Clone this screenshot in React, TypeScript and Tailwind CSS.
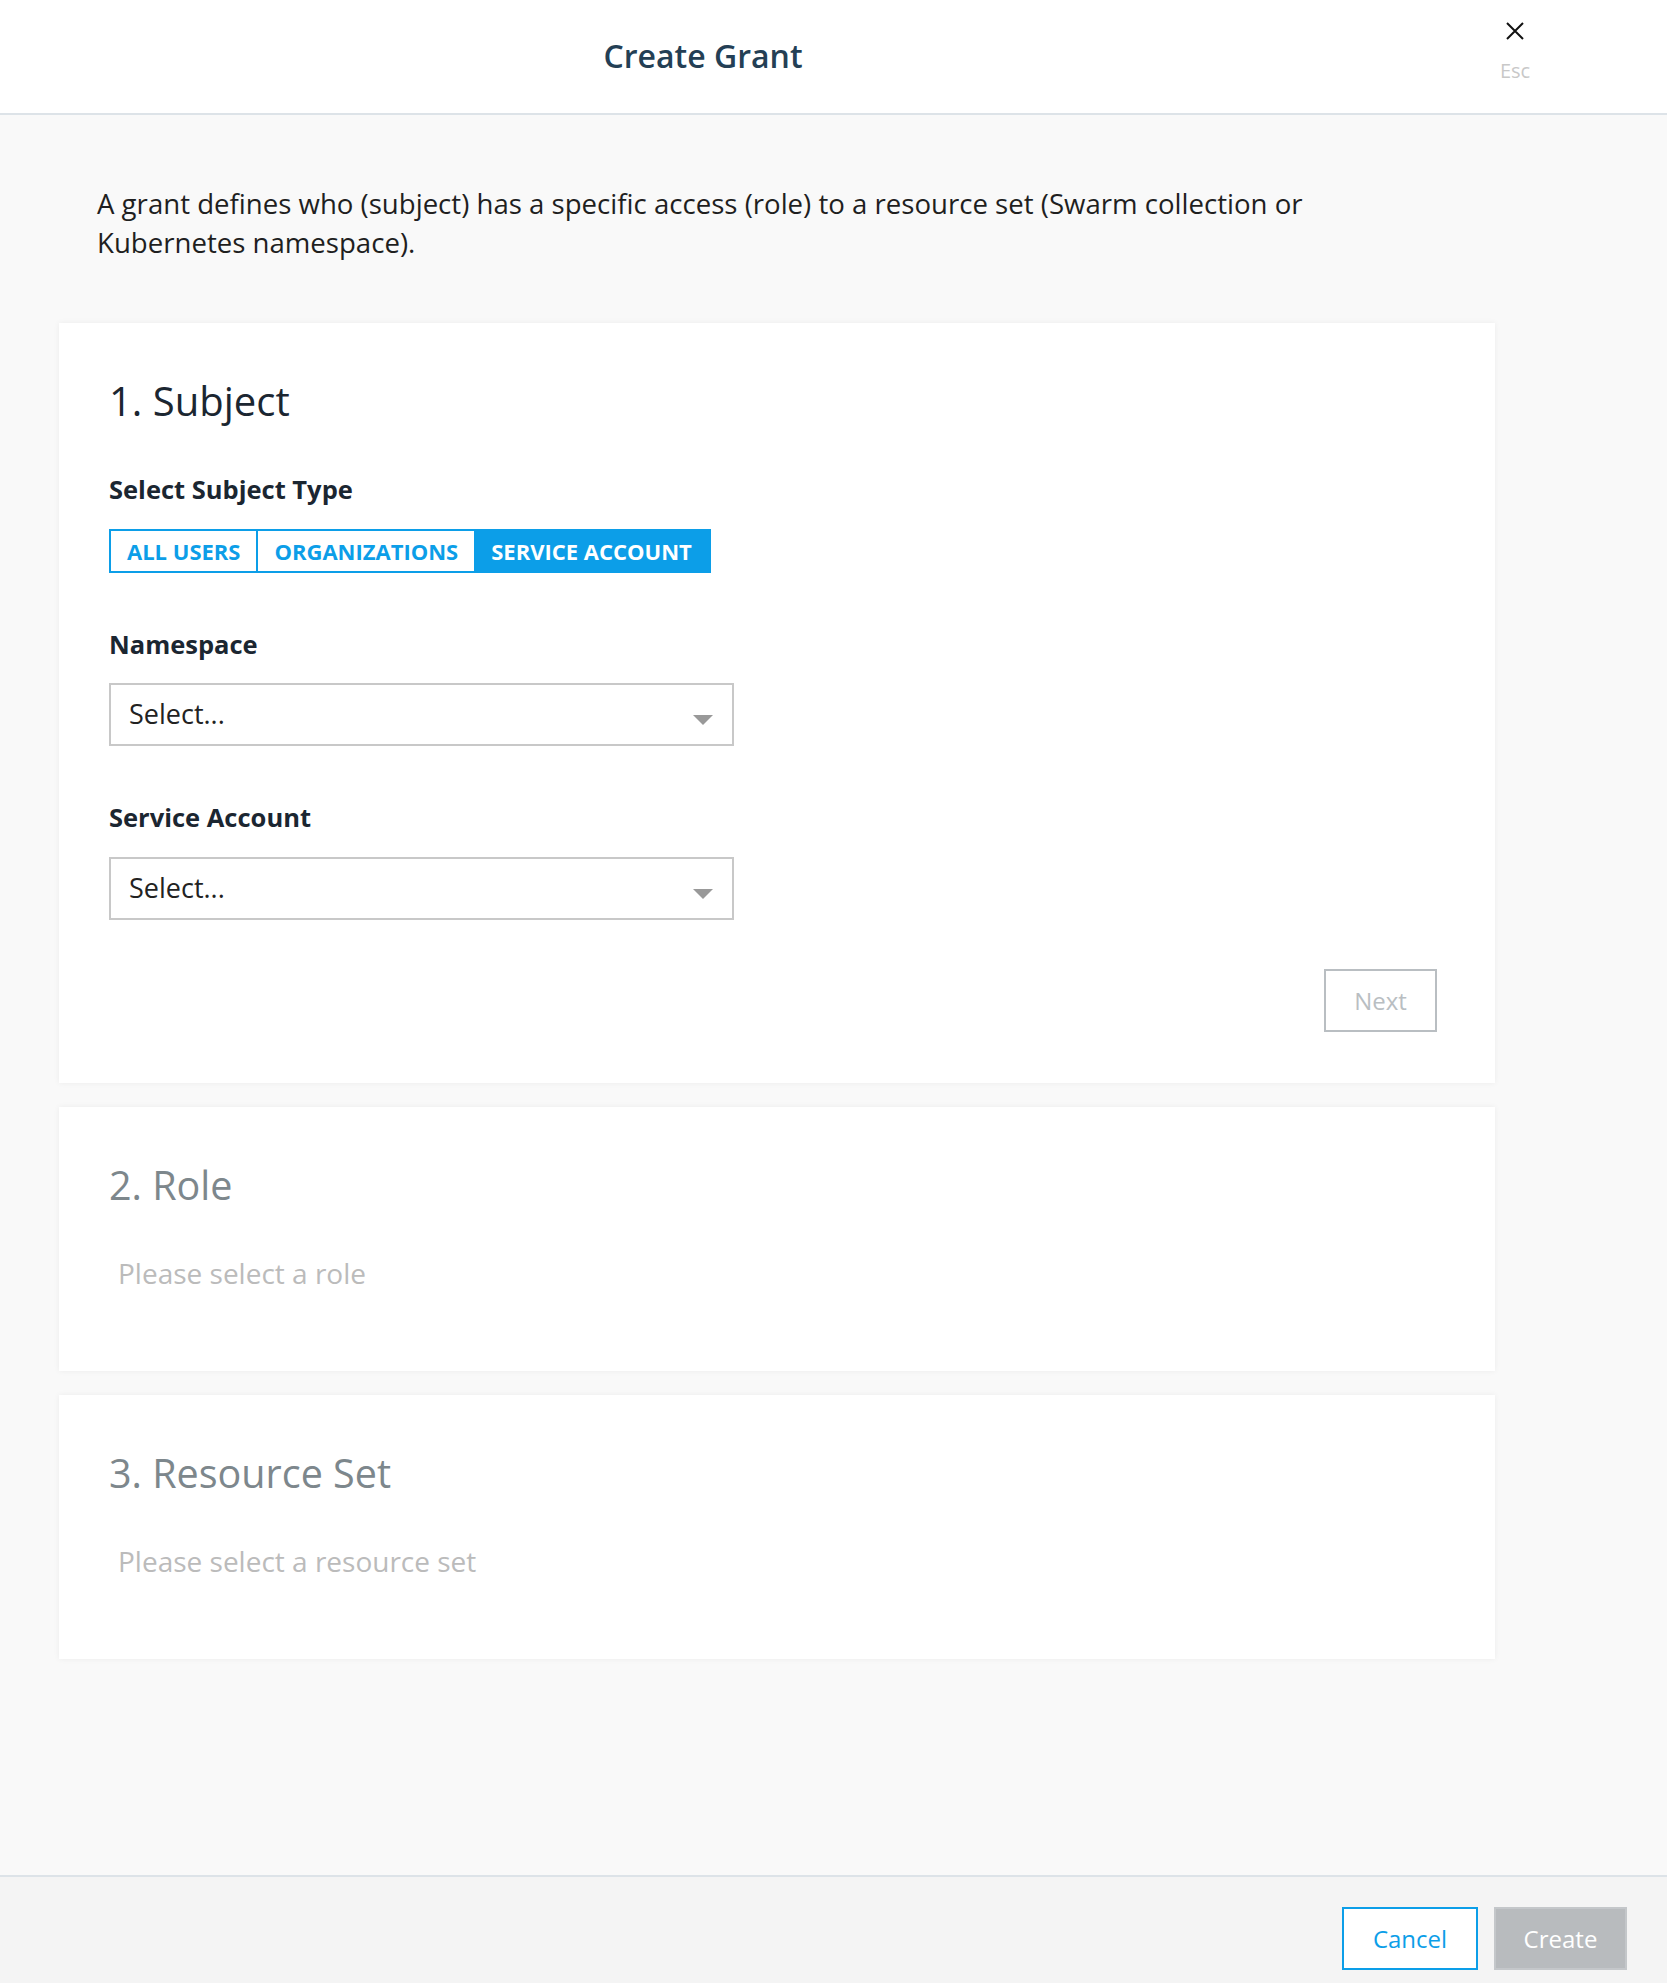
import React from "react";

const tabs = ["ALL USERS", "ORGANIZATIONS", "SERVICE ACCOUNT"];

function SelectBox() {
  return (
    <div className="relative flex h-[63px] w-[625px] items-center border-2 border-[#c8c8c8] bg-white pl-[18px]">
      <span className="text-[27px] text-[#222]">Select...</span>
      <svg className="absolute right-[19px] top-[30px]" width="20" height="10" viewBox="0 0 20 10">
        <path d="M0 0 L20 0 L10 10 Z" fill="#999" />
      </svg>
    </div>
  );
}

function StepCard({ title, hint }: { title: string; hint: string }) {
  return (
    <section className="bg-white px-[50px] pb-[80px] pt-[54px] shadow-[0_0_6px_rgba(0,0,0,0.06)]">
      <h2 className="text-[39.5px] leading-[48px] text-[#7d878c]">{title}</h2>
      <p className="mt-[46px] pl-[9px] text-[28px] leading-[36px] text-[#bbbbbb]">{hint}</p>
    </section>
  );
}

export default function App() {
  const active = 2;
  return (
    <div className="flex h-[1983px] flex-col bg-[#f9f9f9] font-['Open_Sans',sans-serif]">
      <header className="flex h-[115px] shrink-0 border-b-2 border-[#dde3e8] bg-white">
        <div className="w-[1406px] pt-[36px] text-center text-[32px] font-semibold leading-[40px] text-[#243f55]">
          Create Grant
        </div>
        <button className="ml-auto mr-[112px] flex w-[80px] flex-col items-center pt-[22px]">
          <svg width="18" height="18" viewBox="0 0 18 18">
            <path d="M1 1 L17 17 M17 1 L1 17" stroke="#111" strokeWidth="2" />
          </svg>
          <span className="mt-[17px] text-[20px] leading-[28px] text-[#c8c8c8]">Esc</span>
        </button>
      </header>

      <main className="flex-1">
        <p className="w-[1330px] pl-[97px] pt-[69px] text-[27.6px] leading-[39px] text-[#1f1f1f]">
          A grant defines who (subject) has a specific access (role) to a resource set (Swarm collection or Kubernetes
          namespace).
        </p>

        <div className="ml-[59px] mt-[61px] flex w-[1436px] flex-col gap-[24px]">
          <section className="bg-white px-[50px] pb-[51px] pt-[54px] shadow-[0_0_6px_rgba(0,0,0,0.06)]">
            <h2 className="text-[40px] leading-[48px] text-[#1b2631]">1. Subject</h2>

            <h3 className="mt-[48px] text-[25.5px] font-bold leading-[32px] text-[#1b2631]">Select Subject Type</h3>
            <div className="mt-[24px] inline-flex h-[44px] border-2 border-[#0c9ee8]">
              {tabs.map((t, i) => (
                <button
                  key={t}
                  className={
                    i === active
                      ? "bg-[#0c9ee8] px-[17px] text-[22px] font-bold text-white"
                      : i === 0
                        ? "border-r-2 border-[#0c9ee8] bg-white px-[16px] text-[22px] font-bold text-[#0c9ee8]"
                        : "bg-white px-[16px] text-[22px] font-bold text-[#0c9ee8]"
                  }
                >
                  {t}
                </button>
              ))}
            </div>

            <h3 className="mt-[55px] text-[25.5px] font-bold leading-[32px] text-[#1b2631]">Namespace</h3>
            <div className="mt-[23px]">
              <SelectBox />
            </div>

            <h3 className="mt-[55px] text-[25.5px] font-bold leading-[32px] text-[#1b2631]">Service Account</h3>
            <div className="mt-[24px]">
              <SelectBox />
            </div>

            <div className="mt-[49px] flex justify-end pr-[8px]">
              <button className="h-[63px] w-[113px] border-2 border-[#b9bec2] bg-white text-[24px] text-[#b9bec2]">
                Next
              </button>
            </div>
          </section>

          <StepCard title="2. Role" hint="Please select a role" />
          <StepCard title="3. Resource Set" hint="Please select a resource set" />
        </div>
      </main>

      <footer className="flex h-[108px] shrink-0 items-start justify-end gap-[16px] border-t-2 border-[#dde3e8] bg-[#f4f4f4] pr-[40px] pt-[30px]">
        <button className="h-[63px] w-[136px] border-2 border-[#0c9ee8] bg-white text-[24px] text-[#0c9ee8]">Cancel</button>
        <button className="h-[63px] w-[133px] border-2 border-[#c4c7ca] bg-[#b8bbbe] text-[24px] text-white">Create</button>
      </footer>
    </div>
  );
}
